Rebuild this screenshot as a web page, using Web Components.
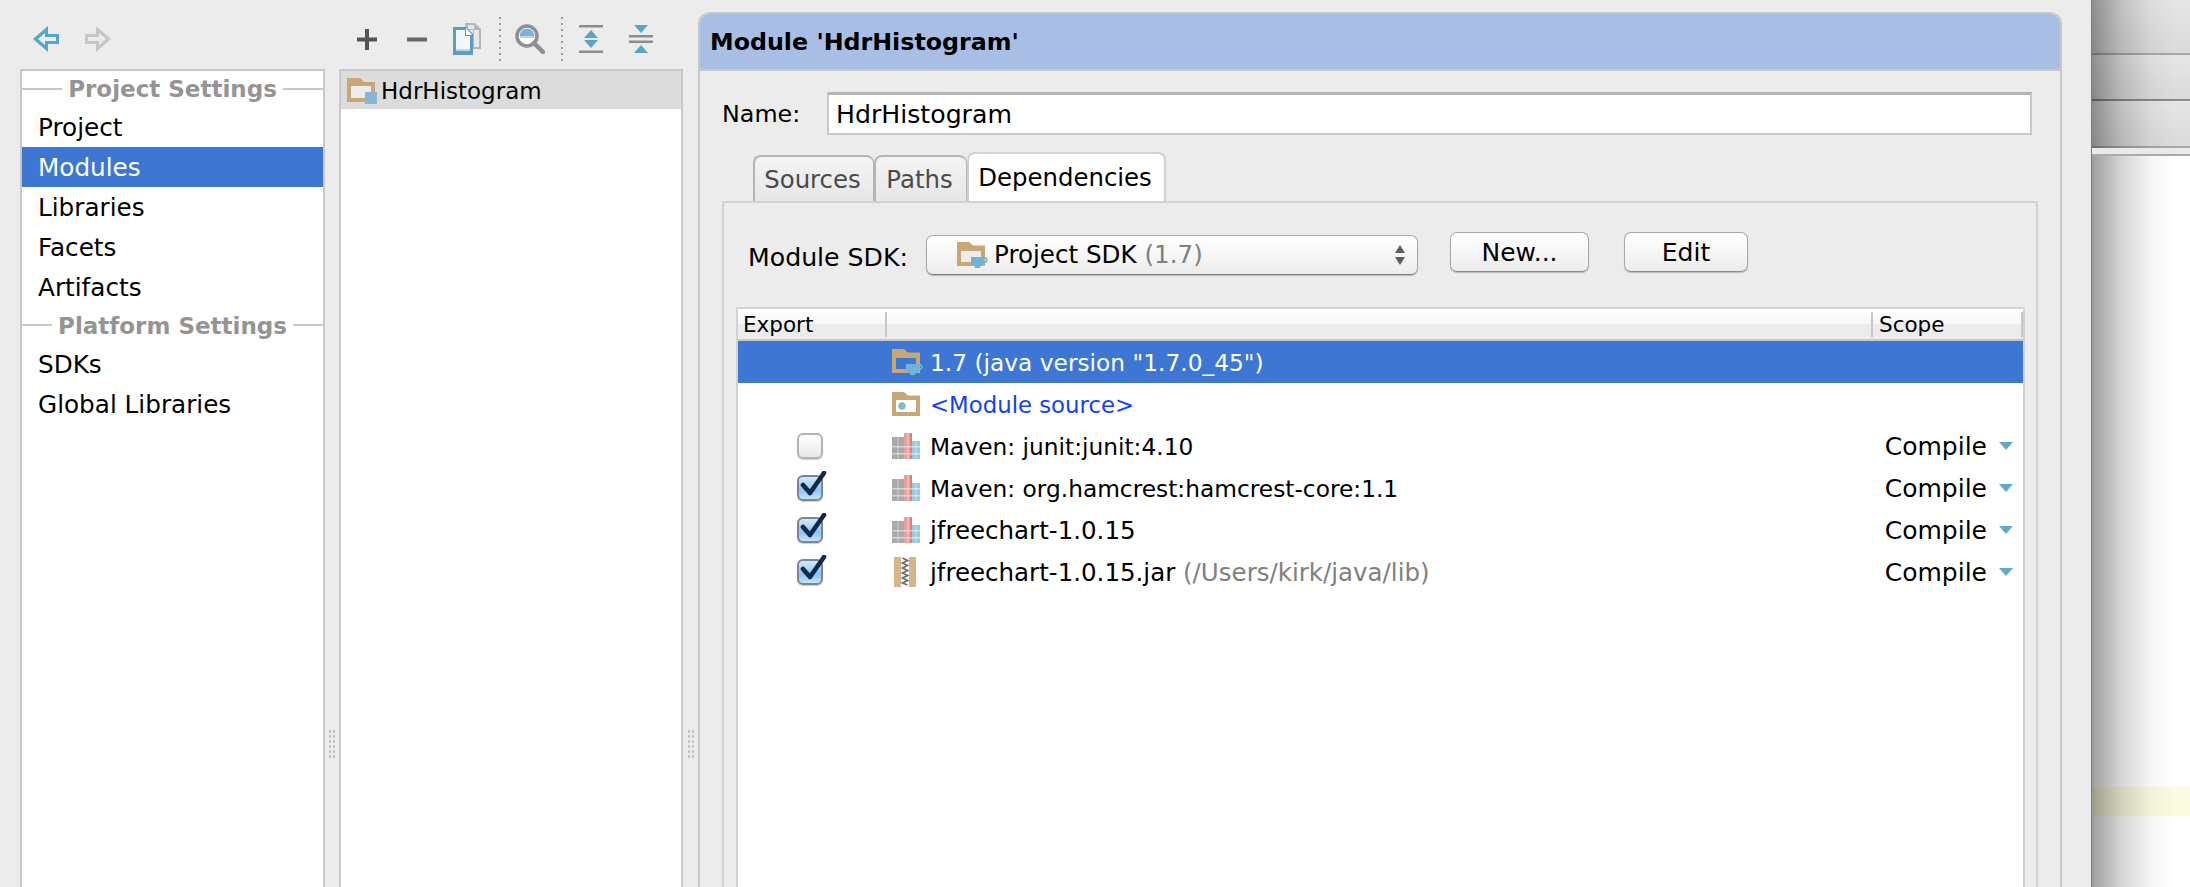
<!DOCTYPE html>
<html>
<head>
<meta charset="utf-8">
<title>Project Structure</title>
<style>
    html, body { margin: 0; height: 100%; overflow: hidden; background: #ececec; }
    body { font-family: "DejaVu Sans", "Liberation Sans", sans-serif; font-size: 23px; color: #000; }
</style>
</head>
<body>
<ps-app></ps-app>
<script>
const ICONS = {
    back: `<svg width="26" height="26" viewBox="0 0 26 26"><path d="M15 0L0 13L15 26V18H26V8H15Z" fill="#55a6cf"/><path d="M12 7L5 13L12 19V15H23V11H12Z" fill="#e6f1f6"/></svg>`,
    forward: `<svg width="26" height="26" viewBox="0 0 26 26"><path d="M11 0L26 13L11 26V18H0V8H11Z" fill="#c6c6c6"/><path d="M14 7L21 13L14 19V15H3V11H14Z" fill="#ececec"/></svg>`,
    plus: `<svg width="20" height="21" viewBox="0 0 20 21"><path d="M8 0h4v8.500h8v4h-8V21H8v-8.500H0v-4h8z" fill="#555"/></svg>`,
    minus: `<svg width="20" height="21" viewBox="0 0 20 21"><rect y="8.500" width="20" height="4" fill="#666"/></svg>`,
    copy: `<svg width="28" height="32" viewBox="0 0 28 32"><path d="M12 0h10l6 6v20h-8V7h-8z" fill="#b5b5b5"/><path d="M15 2h6v5h5v17h-5V6h-6z" fill="#e8e8e8"/><path d="M0 4h13l7 7v21H0z" fill="#5f9cc0"/><path d="M3 7h9v6h5v15H3z" fill="#f4f8fb"/><path d="M13 5v7h6z" fill="#fff"/><rect x="3" y="26" width="14" height="2" fill="#bcd6e6"/></svg>`,
    search: `<svg width="30" height="30" viewBox="0 0 30 30"><circle cx="12" cy="12" r="10" fill="#fff" stroke="#8f8f8f" stroke-width="3.500"/><path d="M4.500 12a7.500 7.500 0 0 1 15 0z" fill="#7cb2d2"/><rect x="5" y="12" width="14" height="2" fill="#bcd8e8"/><path d="M19 19l9 9" stroke="#8f8f8f" stroke-width="4.500" stroke-linecap="round"/></svg>`,
    expand: `<svg width="24" height="28" viewBox="0 0 24 28"><rect width="24" height="2.500" fill="#8c8c8c"/><rect y="25.500" width="24" height="2.500" fill="#8c8c8c"/><path d="M12 5l7 8H5z" fill="#59a4cc"/><path d="M12 23l7-8H5z" fill="#59a4cc"/></svg>`,
    collapse: `<svg width="24" height="28" viewBox="0 0 24 28"><path d="M5 0h14l-7 8z" fill="#59a4cc"/><rect y="10" width="24" height="2.500" fill="#8c8c8c"/><rect y="15.500" width="24" height="2.500" fill="#8c8c8c"/><path d="M12 20l7 8H5z" fill="#59a4cc"/></svg>`,
    module: `<svg width="30" height="26" viewBox="0 0 30 26"><path d="M0 0h13l4 4h11v20H0z" fill="#c9a675"/><rect x="4" y="8" width="20" height="12" fill="#ececec"/><rect x="18" y="14" width="12" height="12" fill="#86b7d4"/></svg>`,
    sdk: `<svg width="31" height="26" viewBox="0 0 31 26"><path d="M0 0h12l4 3.500h12V24H0z" fill="#c9a675"/><rect x="4" y="9" width="20" height="11" fill="var(--inner, #ececec)"/><path d="M14 15h13v5a5 5 0 0 1-4 4.500V26h-5v-1.500a5 5 0 0 1-4-4.500z" fill="#6fb3d9"/><circle cx="27.500" cy="18" r="2.300" fill="none" stroke="#6fb3d9" stroke-width="1.600"/></svg>`,
    source: `<svg width="28" height="24" viewBox="0 0 28 24"><path d="M0 0h12l4 3.500h12V24H0z" fill="#c9a675"/><rect x="4" y="8" width="20" height="12" fill="#fff"/><circle cx="10" cy="14" r="3.800" fill="#86b7d4"/></svg>`,
    lib: `<svg width="28" height="26" viewBox="0 0 28 26"><rect y="4" width="12" height="22" fill="#a9a9a9"/><rect x="12" width="8" height="26" fill="#e9a29b"/><rect x="18" width="2" height="26" fill="#d9827a"/><rect x="20" y="8" width="8" height="18" fill="#9ac8e0"/><path d="M5.500 4h1v22h-1zM15.500 0h1v26h-1zM23.500 8h1v18h-1z" fill="#fff" opacity=".45"/><path d="M0 13h28v1.500H0zM0 20h28v1.500H0z" fill="#fff" opacity=".5"/></svg>`,
    jar: `<svg width="22" height="30" viewBox="0 0 22 30"><rect width="22" height="30" fill="#d6b586"/><rect x="7" width="8" height="30" fill="#fff"/><path d="M8.500 1l5 2.500-5 2.500 5 2.500-5 2.500 5 2.500-5 2.500 5 2.500-5 2.500 5 2.500-5 2.500 5 2" fill="none" stroke="#6d6d6d" stroke-width="1.800"/></svg>`,
    updown: `<svg width="10" height="20" viewBox="0 0 10 20"><path d="M5 0l5 8H0zM5 20L0 12h10z" fill="#5e5e5e"/></svg>`,
    caret: `<svg width="14" height="8" viewBox="0 0 14 8"><path d="M0 0h14L7 8z" fill="#62aacb"/></svg>`,
    check: `<svg width="30" height="26" viewBox="0 0 30 26"><path d="M6 14l7 8L27 2" fill="none" stroke="#0f2a48" stroke-width="4.600" stroke-linecap="round" stroke-linejoin="round"/></svg>`
};

class PsIcon extends HTMLElement {
    connectedCallback() {
        this.attachShadow({mode: "open"});
        this.shadowRoot.innerHTML = `
        <style>
            :host { display: inline-flex; flex: none; }
            svg { display: block; }
        </style>
        ${ICONS[this.getAttribute("name")]}`;
    }
}
customElements.define("ps-icon", PsIcon);

class PsToolbar extends HTMLElement {
    constructor() {
        super();
        this.attachShadow({mode: "open"});
        this.shadowRoot.innerHTML = `
        <style>
            :host { display: flex; height: 69px; box-sizing: border-box; align-items: center; padding-top: 9px; }
        </style>
        <slot></slot>`;
    }
}
customElements.define("ps-toolbar", PsToolbar);

class PsNavHeading extends HTMLElement {
    constructor() {
        super();
        this.attachShadow({mode: "open"});
        this.shadowRoot.innerHTML = `
        <style>
            :host { display: flex; align-items: center; height: 36px; gap: 6px; color: #949494; font-weight: bold; white-space: nowrap; }
            i { flex: 1; height: 2px; background: #c8c8c8; margin-top: -1px; }
        </style>
        <i></i><slot></slot><i></i>`;
    }
}
customElements.define("ps-nav-heading", PsNavHeading);

class PsNavItem extends HTMLElement {
    constructor() {
        super();
        this.attachShadow({mode: "open"});
        this.shadowRoot.innerHTML = `
        <style>
            :host { display: flex; align-items: center; height: 40px; padding-left: 16px; white-space: nowrap; font-size: 24.7px; }
            :host([selected]) { background: #3d76d3; color: #fff; }
        </style>
        <slot></slot>`;
    }
}
customElements.define("ps-nav-item", PsNavItem);

class PsPanel extends HTMLElement {
    constructor() {
        super();
        this.attachShadow({mode: "open"});
        this.shadowRoot.innerHTML = `
        <style>
            :host { display: block; flex: 1; background: #fff; border: 2px solid #c8c8c8; border-bottom: 0; }
        </style>
        <slot></slot>`;
    }
}
customElements.define("ps-panel", PsPanel);

class PsTreeRow extends HTMLElement {
    constructor() {
        super();
        this.attachShadow({mode: "open"});
        this.shadowRoot.innerHTML = `
        <style>
            :host { display: flex; align-items: center; box-sizing: border-box; height: 38px; gap: 4px; padding: 2px 0 0 6px; background: #dcdcdc; white-space: nowrap; }
        </style>
        <slot></slot>`;
    }
}
customElements.define("ps-tree-row", PsTreeRow);

class PsSplitter extends HTMLElement {
    constructor() {
        super();
        this.attachShadow({mode: "open"});
        this.shadowRoot.innerHTML = `
        <style>
            :host { display: flex; flex: none; justify-content: center; padding-top: 729px; box-sizing: border-box; }
            div { width: 8px; height: 30px; background: radial-gradient(circle, #bbb 1px, transparent 1.400px) 0 0 / 4px 5px; }
        </style>
        <div></div>`;
    }
}
customElements.define("ps-splitter", PsSplitter);

class PsTab extends HTMLElement {
    constructor() {
        super();
        this.attachShadow({mode: "open"});
        this.shadowRoot.innerHTML = `
        <style>
            :host { display: flex; align-items: center; justify-content: center; box-sizing: border-box; height: 46px; padding-right: 3px; font-size: 24.4px; background: linear-gradient(#f4f4f4, #e6e6e6); border: 2px solid #b4b4b4; border-bottom: 0; border-right-width: 1px; color: #4a4a4a; border-radius: 8px 8px 0 0; }
            :host([active]) { height: 49px; background: #fff; color: #000; border: 2px solid #d2d2d2; border-bottom: 0; }
        </style>
        <slot></slot>`;
    }
}
customElements.define("ps-tab", PsTab);

class PsButton extends HTMLElement {
    constructor() {
        super();
        this.attachShadow({mode: "open"});
        this.shadowRoot.innerHTML = `
        <style>
            :host { display: flex; align-items: center; justify-content: center; box-sizing: border-box; height: 40px; flex: none; font-size: 25px; background: linear-gradient(#fff, #f6f6f6 50%, #ececec); border: 1px solid #a8a8a8; border-bottom-color: #8c8c8c; border-radius: 7px; box-shadow: 0 1px 1px #bbb; }
        </style>
        <slot></slot>`;
    }
}
customElements.define("ps-button", PsButton);

class PsCombo extends HTMLElement {
    constructor() {
        super();
        this.attachShadow({mode: "open"});
        this.shadowRoot.innerHTML = `
        <style>
            :host { display: flex; align-items: center; box-sizing: border-box; height: 40px; width: 492px; flex: none; padding-left: 30px; gap: 6px; font-size: 24.6px; background: linear-gradient(#fff, #f6f6f6 50%, #ececec); border: 1px solid #a8a8a8; border-bottom-color: #7c7c7c; border-radius: 7px; box-shadow: 0 1px 1px #bbb; white-space: nowrap; }
            .hint { color: #808080; }
            .label { margin-top: -2px; }
            ps-icon:last-child { margin-left: auto; margin-right: 12px; }
        </style>
        <ps-icon name="sdk"></ps-icon><span class="label">Project SDK <span class="hint">(1.7)</span></span><ps-icon name="updown"></ps-icon>`;
    }
}
customElements.define("ps-combo", PsCombo);

class PsCheck extends HTMLElement {
    constructor() {
        super();
        this.attachShadow({mode: "open"});
        this.shadowRoot.innerHTML = `
        <style>
            :host { display: block; position: relative; box-sizing: border-box; width: 26px; height: 26px; flex: none; border-radius: 6px; border: 2px solid #b4b4b4; background: linear-gradient(#fff, #f3f3f3 50%, #e8e8e8); box-shadow: 0 1px 1px #ccc; }
            :host([checked]) { border-color: #7d8496; background: linear-gradient(#d4e7fa, #8cc4f4 60%, #c4e4fc); }
            ps-icon { position: absolute; left: -2px; top: -6px; }
        </style>
        ${this.hasAttribute("checked") ? `<ps-icon name="check"></ps-icon>` : ""}`;
    }
}
customElements.define("ps-check", PsCheck);

class PsDepRow extends HTMLElement {
    constructor() {
        super();
        this.attachShadow({mode: "open"});
        const icon = this.getAttribute("icon");
        const exportCell = this.hasAttribute("export")
            ? `<ps-check ${this.getAttribute("export") === "on" ? "checked" : ""}></ps-check>` : "";
        const scope = this.getAttribute("scope");
        this.shadowRoot.innerHTML = `
        <style>
            :host { display: grid; grid-template-columns: 154px 38px 1fr auto 36px; align-items: center; height: 42px; white-space: nowrap; font-size: 23.3px; }
            :host([selected]) { background: #3d76d3; color: #fff; --inner: #3d76d3; }
            .check { padding-left: 59px; }
            .icon { display: flex; }
            .icon ps-icon[name="jar"] { margin-left: 2px; }
            .scope { font-size: 25px; }
            .caret { display: flex; padding-left: 12px; }
        </style>
        <div class="check">${exportCell}</div>
        <div class="icon"><ps-icon name="${icon}"></ps-icon></div>
        <div><slot></slot></div>
        <div class="scope">${scope || ""}</div>
        <div class="caret">${scope ? `<ps-icon name="caret"></ps-icon>` : ""}</div>`;
    }
}
customElements.define("ps-dep-row", PsDepRow);

class PsDepTable extends HTMLElement {
    constructor() {
        super();
        this.attachShadow({mode: "open"});
        this.shadowRoot.innerHTML = `
        <style>
            :host { display: flex; flex-direction: column; flex: 1; margin: 0 11px 0 12px; background: #fff; border: 2px solid #d2d2d2; border-bottom: 0; }
            .head { display: grid; grid-template-columns: 149px 986px 1fr; height: 30px; font-size: 21.500px; background: linear-gradient(#fff, #f6f6f6 50%, #ececec 50%, #ececec); border-bottom: 2px solid #c8c8c8; }
            .head div { display: flex; align-items: center; padding-left: 5px; border-right: 2px solid #c8c8c8; margin: 3px 0 4px; box-sizing: border-box; }
            .head div:last-child { padding-left: 6px; }
        </style>
        <div class="head"><div>Export</div><div></div><div>Scope</div></div>
        <slot></slot>`;
    }
}
customElements.define("ps-dep-table", PsDepTable);

class PsBackdrop extends HTMLElement {
    constructor() {
        super();
        this.attachShadow({mode: "open"});
        this.shadowRoot.innerHTML = `
        <style>
            :host { display: flex; flex-direction: column; flex: 1; position: relative; background: #fff; }
            .bar { box-sizing: border-box; background: linear-gradient(#e6e6e6, #dadada); border-bottom: 2px solid #a8a8a8; }
            .bar:nth-child(3) { border-bottom-color: #8a8a8a; }
            .gap { position: relative; z-index: 1; box-sizing: border-box; height: 8px; background: #eaeaea; border-bottom: 2px solid #aaa; }
            .line { height: 29px; margin-top: 631px; background: #fbfbe0; }
            .shade { position: absolute; inset: 0; background: linear-gradient(90deg, rgba(0,0,0,.38), rgba(0,0,0,.16) 30%, rgba(0,0,0,.04) 60%, rgba(0,0,0,0) 85%); }
        </style>
        <div class="bar" style="height:55px"></div>
        <div class="bar" style="height:46px"></div>
        <div class="bar" style="height:47px"></div>
        <div class="gap"></div>
        <div class="line"></div>
        <div class="shade"></div>`;
    }
}
customElements.define("ps-backdrop", PsBackdrop);

class PsModuleEditor extends HTMLElement {
    constructor() {
        super();
        this.attachShadow({mode: "open"});
        this.shadowRoot.innerHTML = `
        <style>
            :host { display: flex; flex-direction: column; flex: none; box-sizing: border-box; width: 1364px; margin-top: 12px; border: 2px solid #c8c8c8; border-bottom: 0; border-radius: 12px 12px 0 0; }
            header { height: 55px; background: #a9bee4; border-bottom: 2px solid #c8c8c8; border-radius: 10px 10px 0 0; display: flex; align-items: center; padding-left: 10px; font-weight: bold; font-size: 23.750px; white-space: nowrap; }
            .name { display: flex; align-items: center; height: 43px; margin: 21px 28px 0 22px; }
            .name label { width: 105px; font-size: 23.800px; }
            .input { flex: 1; box-sizing: border-box; height: 43px; display: flex; align-items: center; padding-left: 7px; font-size: 25.200px; background: #fff; border: 2px solid #c8c8c8; border-top: 3px solid #b4b4b4; }
            .tabs { display: flex; align-items: flex-end; height: 49px; margin: 17px 0 0 53px; }
            .tabs ps-tab:nth-child(1) { width: 121px; }
            .tabs ps-tab:nth-child(2) { width: 93px; }
            .tabs ps-tab:nth-child(3) { width: 199px; }
            .panel { flex: 1; display: flex; flex-direction: column; margin: 0 22px 0 22px; border: 2px solid #d2d2d2; border-bottom: 0; min-height: 0; }
            .sdk { display: flex; align-items: flex-start; height: 104px; box-sizing: border-box; padding: 29px 0 0 24px; }
            .sdk label { width: 178px; padding-top: 11px; font-size: 25.200px; white-space: nowrap; }
            .sdk ps-button:nth-of-type(1) { width: 139px; margin-left: 32px; }
            .sdk ps-button:nth-of-type(2) { width: 124px; margin-left: 35px; }
            .sdk ps-combo { margin-top: 3px; }
        </style>
        <header><slot name="title"></slot></header>
        <div class="name"><label>Name:</label><div class="input"><slot name="name"></slot></div></div>
        <div class="tabs"><ps-tab>Sources</ps-tab><ps-tab>Paths</ps-tab><ps-tab active>Dependencies</ps-tab></div>
        <div class="panel">
            <div class="sdk"><label>Module SDK:</label><ps-combo></ps-combo><ps-button>New...</ps-button><ps-button>Edit</ps-button></div>
            <slot></slot>
        </div>`;
    }
}
customElements.define("ps-module-editor", PsModuleEditor);

class PsApp extends HTMLElement {
    constructor() {
        super();
        this.attachShadow({mode: "open"});
        this.shadowRoot.innerHTML = `
        <style>
            :host { display: flex; width: 2190px; height: 887px; overflow: hidden; }
            .window { display: flex; flex: none; box-sizing: border-box; width: 2092px; height: 887px; padding-left: 20px; background: #ececec; border-right: 1px solid #7a7a7a; }
            .col { display: flex; flex-direction: column; flex: none; }
            .nav { width: 305px; }
            .tree { width: 344px; }
            .back { margin-left: 13px; }
            .fwd { margin-left: 26px; }
            .add { margin-left: 18px; }
            .del { margin-left: 30px; }
            .cp { margin-left: 26px; }
            .sep { width: 2px; height: 44px; margin: 0 14px 0 18px; background: repeating-linear-gradient(#9a9a9a 0 2px, transparent 2px 6px); }
            .sep2 { margin: 0 16px 0 16px; }
            .col2 { margin-left: 26px; }
            .platform { height: 37px; }
            .larger { font-size: 24.500px; }
            .link { color: #1540f8; font-size: 22.800px; }
            .path { color: #808080; }
        </style>
        <div class="window">
            <div class="col nav">
                <ps-toolbar><ps-icon class="back" name="back"></ps-icon><ps-icon class="fwd" name="forward"></ps-icon></ps-toolbar>
                <ps-panel>
                    <ps-nav-heading>Project Settings</ps-nav-heading>
                    <ps-nav-item>Project</ps-nav-item>
                    <ps-nav-item selected>Modules</ps-nav-item>
                    <ps-nav-item>Libraries</ps-nav-item>
                    <ps-nav-item>Facets</ps-nav-item>
                    <ps-nav-item>Artifacts</ps-nav-item>
                    <ps-nav-heading class="platform">Platform Settings</ps-nav-heading>
                    <ps-nav-item>SDKs</ps-nav-item>
                    <ps-nav-item>Global Libraries</ps-nav-item>
                </ps-panel>
            </div>
            <ps-splitter style="width:14px"></ps-splitter>
            <div class="col tree">
                <ps-toolbar>
                    <ps-icon class="add" name="plus"></ps-icon>
                    <ps-icon class="del" name="minus"></ps-icon>
                    <ps-icon class="cp" name="copy"></ps-icon>
                    <div class="sep"></div>
                    <ps-icon name="search"></ps-icon>
                    <div class="sep sep2"></div>
                    <ps-icon name="expand"></ps-icon>
                    <ps-icon class="col2" name="collapse"></ps-icon>
                </ps-toolbar>
                <ps-panel><ps-tree-row><ps-icon name="module"></ps-icon>HdrHistogram</ps-tree-row></ps-panel>
            </div>
            <ps-splitter style="width:15px"></ps-splitter>
            <ps-module-editor>
                <span slot="title">Module 'HdrHistogram'</span>
                <span slot="name">HdrHistogram</span>
                <ps-dep-table>
                    <ps-dep-row selected icon="sdk">1.7 (java version "1.7.0_45")</ps-dep-row>
                    <ps-dep-row icon="source"><span class="link">&lt;Module source&gt;</span></ps-dep-row>
                    <ps-dep-row icon="lib" export="off" scope="Compile">Maven: junit:junit:4.10</ps-dep-row>
                    <ps-dep-row icon="lib" export="on" scope="Compile">Maven: org.hamcrest:hamcrest-core:1.1</ps-dep-row>
                    <ps-dep-row icon="lib" export="on" scope="Compile"><span class="larger">jfreechart-1.0.15</span></ps-dep-row>
                    <ps-dep-row icon="jar" export="on" scope="Compile"><span class="larger">jfreechart-1.0.15.jar <span class="path">(/Users/kirk/java/lib)</span></span></ps-dep-row>
                </ps-dep-table>
            </ps-module-editor>
        </div>
        <ps-backdrop></ps-backdrop>`;
    }
}
customElements.define("ps-app", PsApp);
</script>
</body>
</html>
